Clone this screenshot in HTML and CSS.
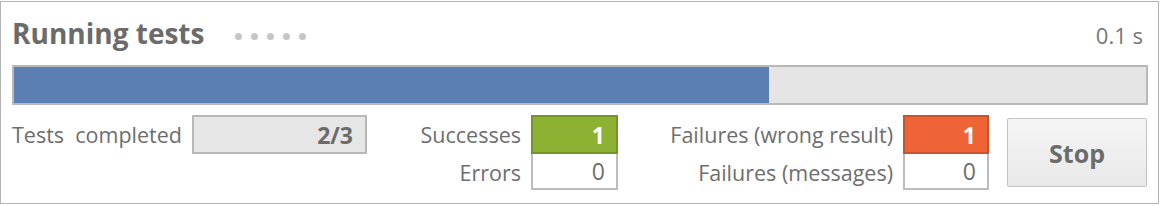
FILE: index.html
```html
<!DOCTYPE html>
<html>
<head>
  <link rel="stylesheet" href="styles.css">
</head>
<body>
  <div class="panel">
    <div class="header">
      <h1 class="title">Running tests<span class="dots"><i></i><i></i><i></i><i></i><i></i></span></h1>
      <span class="elapsed">0.1 s</span>
    </div>

    <div class="progress">
      <div class="progress-fill" style="width: 66.7%;"></div>
    </div>

    <div class="stats">
      <div class="completed">
        <span class="label">Tests&nbsp; completed</span>
        <div class="box box-total">2/3</div>
      </div>

      <div class="counts">
        <span class="label">Successes</span>
        <div class="box box-success">1</div>
        <span class="label">Errors</span>
        <div class="box lower">0</div>
      </div>

      <div class="counts failures">
        <span class="label">Failures (wrong result)</span>
        <div class="box box-failure">1</div>
        <span class="label">Failures (messages)</span>
        <div class="box lower">0</div>
      </div>

      <button class="stop" type="button">Stop</button>
    </div>
  </div>
</body>
</html>
```

FILE: styles.css
```css
body {
  margin: 0;
  padding-top: 1px;
  font-family: "Open Sans", Lato, sans-serif;
  color: #6e6e6e;
}

.panel {
  width: 1159px;
  box-sizing: border-box;
  border: 1px solid #b4b4b4;
  padding: 0 10px 13px 11px;
}

.header {
  display: flex;
  align-items: baseline;
  height: 63px;
  padding-top: 15px;
  box-sizing: border-box;
}

.title {
  margin: 0;
  font-size: 28px;
  font-weight: 700;
  line-height: 32px;
  color: #6b6b6b;
}

.dots {
  display: inline-flex;
  gap: 9px;
  margin-left: 31px;
  vertical-align: middle;
}

.dots i {
  width: 7px;
  height: 7px;
  border-radius: 50%;
  background: #c6c6c6;
}

.elapsed {
  margin-left: auto;
  margin-right: 5px;
  font-size: 22px;
  color: #777;
}

.progress {
  height: 40px;
  box-sizing: border-box;
  border: 2px solid #b9b9b9;
  background: #e5e5e5;
}

.progress-fill {
  height: 100%;
  background: #5b7fb3;
}

.stats {
  display: flex;
  margin-top: 10px;
}

.label {
  font-size: 21.5px;
  white-space: nowrap;
}

.completed {
  display: flex;
  align-items: center;
  gap: 10px;
  height: 39px;
}

.completed .label {
  width: 170px;
}

.box {
  display: flex;
  align-items: center;
  justify-content: flex-end;
  padding-right: 11px;
  border: 2px solid #bdbdbd;
  background: #fff;
  font-size: 23px;
  box-sizing: border-box;
}

.box.lower {
  border-top: none;
}

.box-total {
  width: 175px;
  height: 39px;
  padding-right: 12px;
  background: #e6e6e6;
  border-color: #b8b8b8;
  font-weight: 700;
  color: #6b6b6b;
}

.box-success {
  background: #8db133;
  border-color: #73952a;
  color: #fff;
  font-weight: 700;
}

.box-failure {
  background: #ee6436;
  border-color: #c9532d;
  color: #fff;
  font-weight: 700;
}

.counts {
  display: grid;
  grid-template-columns: 1fr 87px;
  grid-template-rows: 39px 36px;
  column-gap: 10px;
  width: 251px;
}

.counts .label {
  align-self: center;
  justify-self: end;
}

.failures {
  grid-template-columns: 1fr 86px;
  width: 371px;
}

.stop {
  width: 140px;
  margin: 3px 0 3px 18px;
  border: 1px solid #c3c3c3;
  border-radius: 2px;
  background: linear-gradient(#f5f5f5, #e9e9e9);
  font-family: "Open Sans", Lato, sans-serif;
  font-size: 25px;
  font-weight: 700;
  color: #6b6b6b;
  cursor: pointer;
}
```
